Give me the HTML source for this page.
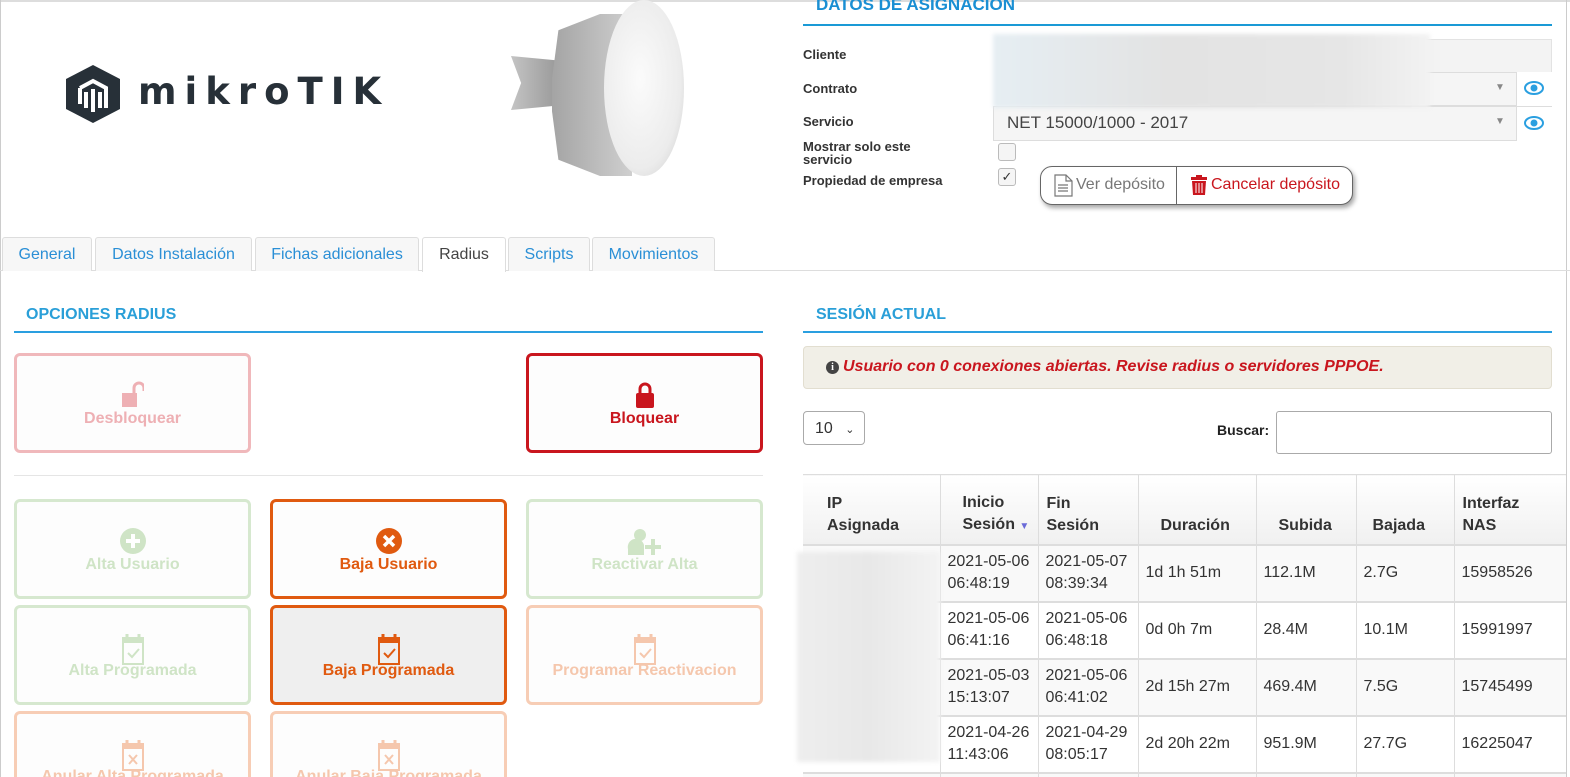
<!DOCTYPE html>
<html><head><meta charset="utf-8">
<style>
*{box-sizing:border-box;margin:0;padding:0}
html,body{width:1570px;height:777px;overflow:hidden}
body{background:#fff;font-family:"Liberation Sans",sans-serif;position:relative;color:#333}
.a{position:absolute}
.lbl{position:absolute;left:803px;font-size:13px;font-weight:bold;color:#333;line-height:13px}
.tab{position:absolute;top:237px;height:34px;border:1px solid #ddd;border-bottom:none;border-radius:3px 3px 0 0;background:#f7f7f7;color:#2a8fd6;font-size:16px;text-align:center;line-height:33px}
.h{position:absolute;font-size:16px;font-weight:bold;color:#2a9fd8}
.btn{position:absolute;width:237px;height:100px;border:3px solid;border-radius:6px;background:#fdfdfd;font-size:16px;font-weight:bold;text-align:center}
.btn svg{position:absolute;left:50%;transform:translateX(-50%);top:25px}
.btn span{position:absolute;left:0;right:0;top:54px;white-space:nowrap}
td,th{border-right:1px solid #ddd;font-size:16px;padding:0 7px;vertical-align:middle;text-align:left}
th{font-weight:bold;color:#333;line-height:22px;padding-top:12px;padding-left:8px;vertical-align:middle;background:linear-gradient(#fff,#f0f0f0)}
td{line-height:22px;color:#333;border-top:2px solid #ddd}
</style></head><body>
<div class="a" style="left:0;top:0;width:1570px;height:2px;background:#ddd"></div>
<div class="a" style="left:0;top:0;width:1px;height:777px;background:#ccc"></div>
<div class="a" style="left:1566px;top:0;width:1px;height:777px;background:#ccc"></div>

<!-- logo -->
<svg class="a" style="left:64px;top:64px" width="58" height="60" viewBox="0 0 58 60"><polygon points="29,1 56,15 56,45 29,59 2,45 2,15" fill="#273038"/><path d="M16 24 L29 17 L42 24 L42 44 M29 25 L29 48 M16 24 L16 40 M22 28 L22 44 M36 28 L36 44" stroke="#fff" stroke-width="4" fill="none"/></svg>
<div class="a" style="left:138px;top:70px;font-size:37px;font-weight:bold;letter-spacing:8px;color:#273038;font-family:'DejaVu Sans',sans-serif;line-height:44px">mikroTIK</div>

<!-- device -->
<div class="a" style="left:511px;top:56px;width:46px;height:54px;background:linear-gradient(90deg,#c4c4c4,#9a9a9a);clip-path:polygon(0 0,100% 8%,100% 92%,0 100%,22% 50%)"></div>
<div class="a" style="left:552px;top:14px;width:80px;height:162px;background:linear-gradient(90deg,#a4a4a4,#cfcfcf);clip-path:polygon(8% 10%,60% 0,100% 0,100% 100%,60% 100%,8% 90%,0 60%,0 40%)"></div>
<div class="a" style="left:604px;top:0;width:80px;height:176px;border-radius:50%;background:radial-gradient(ellipse at 45% 45%,#fbfbfb,#ececec 65%,#c6c6c6)"></div>

<!-- datos asignacion -->
<div class="h" style="left:816px;top:-5px;font-size:17px;color:#1a8fd3">DATOS DE ASIGNACION</div>
<div class="a" style="left:803px;top:24px;width:749px;height:2px;background:#1a9ad6"></div>
<div class="lbl" style="top:48px">Cliente</div>
<div class="lbl" style="top:82px">Contrato</div>
<div class="lbl" style="top:115px">Servicio</div>
<div class="lbl" style="top:140px">Mostrar solo este<br>servicio</div>
<div class="lbl" style="top:174px">Propiedad de empresa</div>
<div class="a" style="left:1210px;top:39px;width:342px;height:34px;background:#f3f3f3;border:1px solid #e3e3e3"></div>
<div class="a" style="left:1210px;top:72px;width:342px;height:34px;background:#f5f5f5;border:1px solid #ddd"></div>
<div class="a" style="left:993px;top:106px;width:559px;height:35px;background:#f5f5f5;border:1px solid #ddd"></div>
<div class="a" style="left:1516px;top:72px;width:36px;height:69px;border-left:1px solid #ddd;background:#fff"></div>
<div class="a" style="left:1516px;top:106px;width:36px;height:1px;background:#ddd"></div>
<div class="a" style="left:1495px;top:82px;font-size:10px;color:#888">▼</div>
<div class="a" style="left:1495px;top:116px;font-size:10px;color:#888">▼</div>
<svg class="a" style="left:1524px;top:81px" width="20" height="14"><ellipse cx="10" cy="7" rx="9" ry="6" fill="none" stroke="#2a9fe0" stroke-width="2"/><circle cx="10" cy="7" r="3.5" fill="#2a9fe0"/></svg>
<svg class="a" style="left:1524px;top:116px" width="20" height="14"><ellipse cx="10" cy="7" rx="9" ry="6" fill="none" stroke="#2a9fe0" stroke-width="2"/><circle cx="10" cy="7" r="3.5" fill="#2a9fe0"/></svg>
<div class="a" style="left:993px;top:34px;width:437px;height:74px;background:linear-gradient(90deg,#e6eef3,#e3e3e3 40%,#e6e6e6 80%,#f2f2f2);filter:blur(2px)"></div>
<div class="a" style="left:1007px;top:113px;font-size:17px;color:#444">NET 15000/1000 - 2017</div>
<div class="a" style="left:998px;top:143px;width:18px;height:18px;border:1px solid #bbb;border-radius:3px;background:#f5f5f5"></div>
<div class="a" style="left:998px;top:168px;width:18px;height:18px;border:1px solid #bbb;border-radius:3px;background:#f5f5f5;font-size:13px;line-height:16px;text-align:center;color:#333">✓</div>
<div class="a" style="left:1040px;top:166px;width:313px;height:39px;border:1px solid #666;border-radius:12px;background:#fff;box-shadow:2px 3px 5px rgba(0,0,0,.35)"></div>
<div class="a" style="left:1176px;top:167px;width:1px;height:37px;background:#666"></div>
<svg class="a" style="left:1054px;top:174px" width="20" height="23"><path d="M1 1h11l6 6v15H1z M12 1v6h6 M4 11h10 M4 14h10 M4 17h10" fill="none" stroke="#777" stroke-width="1.2"/></svg>
<div class="a" style="left:1076px;top:176px;font-size:16px;color:#777">Ver depósito</div>
<svg class="a" style="left:1190px;top:175px" width="18" height="20"><rect x="1" y="2" width="16" height="3" fill="#c9161e"/><rect x="6" y="0" width="6" height="3" fill="#c9161e"/><path d="M2 6h14l-1 14H3z" fill="#c9161e"/><path d="M6 8v10M9 8v10M12 8v10" stroke="#fff" stroke-width="1"/></svg>
<div class="a" style="left:1211px;top:176px;font-size:16px;color:#c9161e">Cancelar depósito</div>

<!-- tabs -->
<div class="a" style="left:0;top:270px;width:1570px;height:1px;background:#ddd"></div>
<div class="tab" style="left:2px;width:90px">General</div>
<div class="tab" style="left:95px;width:157px">Datos Instalación</div>
<div class="tab" style="left:255px;width:164px">Fichas adicionales</div>
<div class="tab" style="left:422px;width:84px;background:#fff;color:#444;height:35px">Radius</div>
<div class="tab" style="left:508px;width:82px">Scripts</div>
<div class="tab" style="left:592px;width:123px">Movimientos</div>

<!-- opciones radius -->
<div class="h" style="left:26px;top:306px">OPCIONES RADIUS</div>
<div class="a" style="left:14px;top:331px;width:749px;height:2px;background:#2a9fe0"></div>
<div class="btn" style="left:14px;top:353px;border-color:#f0b8bb;color:#eeb0b4"><svg width="22" height="28" style="top:25px"><path d="M12 12V7a5 5 0 0 1 10 0v3" fill="none" stroke="#eeb0b4" stroke-width="3"/><rect x="0" y="12" width="15" height="14" fill="#eeb0b4"/></svg><span>Desbloquear</span></div>
<div class="btn" style="left:526px;top:353px;border-color:#c9161e;color:#c9161e"><svg width="18" height="28"><path d="M4 13V8a5 5 0 0 1 10 0v5" fill="none" stroke="#c9161e" stroke-width="3"/><rect x="0" y="12" width="18" height="15" rx="2" fill="#c9161e"/></svg><span>Bloquear</span></div>
<div class="a" style="left:14px;top:475px;width:749px;height:1px;background:#e5e5e5"></div>

<div class="btn" style="left:14px;top:499px;border-color:#d6e8cf;color:#cfe4c6"><svg width="28" height="28"><circle cx="14" cy="14" r="13" fill="#cfe4c6"/><path d="M14 7v14M7 14h14" stroke="#fff" stroke-width="4"/></svg><span>Alta Usuario</span></div>
<div class="btn" style="left:270px;top:499px;border-color:#e05a10;color:#e05a10"><svg width="28" height="28"><circle cx="14" cy="14" r="13" fill="#e05a10"/><path d="M9 9l10 10M19 9l-10 10" stroke="#fff" stroke-width="3.5"/></svg><span>Baja Usuario</span></div>
<div class="btn" style="left:526px;top:499px;border-color:#d6e8cf;color:#cfe4c6"><svg width="36" height="30"><circle cx="13" cy="8" r="6" fill="#cfe4c6"/><path d="M1 28v-6a8 8 0 0 1 16-4v10z" fill="#cfe4c6"/><path d="M26 12v16M18 20h16" stroke="#cfe4c6" stroke-width="4"/></svg><span>Reactivar Alta</span></div>

<div class="btn" style="left:14px;top:605px;border-color:#d6e8cf;color:#cfe4c6"><svg width="22" height="32"><rect x="1" y="5" width="20" height="26" fill="none" stroke="#cfe4c6" stroke-width="2"/><rect x="1" y="5" width="20" height="5" fill="#cfe4c6"/><path d="M5 1v7M17 1v7" stroke="#cfe4c6" stroke-width="3"/><path d="M6 20l4 4 7-8" fill="none" stroke="#cfe4c6" stroke-width="2"/></svg><span>Alta Programada</span></div>
<div class="btn" style="left:270px;top:605px;border-color:#e05a10;color:#e05a10;background:#efefef"><svg width="22" height="32"><rect x="1" y="5" width="20" height="26" fill="none" stroke="#e05a10" stroke-width="2"/><rect x="1" y="5" width="20" height="5" fill="#e05a10"/><path d="M5 1v7M17 1v7" stroke="#e05a10" stroke-width="3"/><path d="M6 20l4 4 7-8" fill="none" stroke="#e05a10" stroke-width="2"/></svg><span>Baja Programada</span></div>
<div class="btn" style="left:526px;top:605px;border-color:#f7cdb5;color:#f5c7ad"><svg width="22" height="32"><rect x="1" y="5" width="20" height="26" fill="none" stroke="#f5c7ad" stroke-width="2"/><rect x="1" y="5" width="20" height="5" fill="#f5c7ad"/><path d="M5 1v7M17 1v7" stroke="#f5c7ad" stroke-width="3"/><path d="M6 20l4 4 7-8" fill="none" stroke="#f5c7ad" stroke-width="2"/></svg><span>Programar Reactivacion</span></div>

<div class="btn" style="left:14px;top:711px;border-color:#f7cdb5;color:#f5c7ad"><svg width="22" height="32"><rect x="1" y="5" width="20" height="26" fill="none" stroke="#f5c7ad" stroke-width="2"/><rect x="1" y="5" width="20" height="5" fill="#f5c7ad"/><path d="M5 1v7M17 1v7" stroke="#f5c7ad" stroke-width="3"/><path d="M7 16l8 9M15 16l-8 9" stroke="#f5c7ad" stroke-width="2"/></svg><span>Anular Alta Programada</span></div>
<div class="btn" style="left:270px;top:711px;border-color:#f7cdb5;color:#f5c7ad"><svg width="22" height="32"><rect x="1" y="5" width="20" height="26" fill="none" stroke="#f5c7ad" stroke-width="2"/><rect x="1" y="5" width="20" height="5" fill="#f5c7ad"/><path d="M5 1v7M17 1v7" stroke="#f5c7ad" stroke-width="3"/><path d="M7 16l8 9M15 16l-8 9" stroke="#f5c7ad" stroke-width="2"/></svg><span>Anular Baja Programada</span></div>

<!-- sesion actual -->
<div class="h" style="left:816px;top:306px">SESIÓN ACTUAL</div>
<div class="a" style="left:803px;top:331px;width:749px;height:2px;background:#2a9fe0"></div>
<div class="a" style="left:803px;top:346px;width:749px;height:43px;background:#f1efe7;border:1px solid #e2ded0;border-radius:4px"></div>
<div class="a" style="left:826px;top:361px;width:13px;height:13px;border-radius:50%;background:#444;color:#fff;font-size:10px;font-weight:bold;text-align:center;line-height:13px;font-family:'Liberation Serif',serif">i</div>
<div class="a" style="left:843px;top:358px;font-size:16px;font-weight:bold;font-style:italic;color:#c9161e;white-space:nowrap">Usuario con 0 conexiones abiertas. Revise radius o servidores PPPOE.</div>
<div class="a" style="left:803px;top:411px;width:62px;height:34px;border:1px solid #aaa;border-radius:4px;font-size:16px;padding:8px 0 0 11px">10 <span style="font-size:11px;margin-left:8px">&#8964;</span></div>
<div class="a" style="left:1217px;top:422px;font-size:14px;font-weight:bold;color:#222">Buscar:</div>
<div class="a" style="left:1276px;top:411px;width:276px;height:43px;border:1px solid #aaa;border-radius:3px"></div>

<table class="a" style="left:803px;top:474px;width:763px;border-collapse:collapse;border-top:1px solid #ddd">
<tr style="height:70px;border-bottom:2px solid #111">
<th style="width:137px;padding-left:24px">IP<br>Asignada</th>
<th style="width:98px;padding-left:22px">Inicio<br>Sesión <span style="color:#6a6ad8;font-size:10px">▼</span></th>
<th style="width:100px">Fin<br>Sesión</th>
<th style="width:118px;padding-left:22px"><br>Duración</th>
<th style="width:100px;padding-left:22px"><br>Subida</th>
<th style="width:98px;padding-left:16px"><br>Bajada</th>
<th style="border-right:none">Interfaz<br>NAS</th>
</tr>
<tr style="height:57px;background:#f9f9f9"><td></td><td>2021-05-06<br>06:48:19</td><td>2021-05-07<br>08:39:34</td><td>1d 1h 51m</td><td>112.1M</td><td>2.7G</td><td style="border-right:none">15958526</td></tr>
<tr style="height:57px"><td></td><td>2021-05-06<br>06:41:16</td><td>2021-05-06<br>06:48:18</td><td>0d 0h 7m</td><td>28.4M</td><td>10.1M</td><td style="border-right:none">15991997</td></tr>
<tr style="height:57px;background:#f9f9f9"><td></td><td>2021-05-03<br>15:13:07</td><td>2021-05-06<br>06:41:02</td><td>2d 15h 27m</td><td>469.4M</td><td>7.5G</td><td style="border-right:none">15745499</td></tr>
<tr style="height:57px"><td></td><td>2021-04-26<br>11:43:06</td><td>2021-04-29<br>08:05:17</td><td>2d 20h 22m</td><td>951.9M</td><td>27.7G</td><td style="border-right:none">16225047</td></tr>
<tr style="height:20px;background:#f9f9f9"><td></td><td></td><td></td><td></td><td></td><td></td><td style="border-right:none"></td></tr>
</table>
<div class="a" style="left:797px;top:552px;width:143px;height:210px;background:linear-gradient(90deg,#eee,#e8e8e8 50%,#f3f3f3);filter:blur(2px)"></div>
</body></html>
